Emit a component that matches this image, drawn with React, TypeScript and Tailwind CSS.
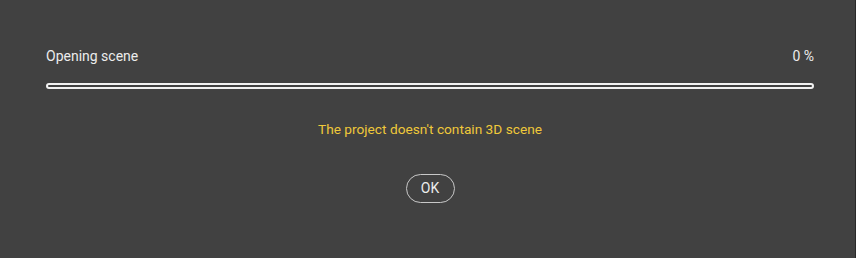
export default function App() {
  return (
    <div className="flex h-[258px] w-[856px] bg-[#414141] font-['Roboto',sans-serif]">
      <div className="flex flex-1 flex-col pl-[46px] pr-[41px] pt-[47px]">
        <div className="flex items-center justify-between text-[14px] leading-[18px] text-[#ececec]">
          <span>Opening scene</span>
          <span>0 %</span>
        </div>
        <div className="mt-[18px] h-[6px] rounded-full border-2 border-[#f2f2f2]" />
        <div className="mt-[31px] text-center text-[13.7px] leading-[18px] text-[#efc83a]">
          The project doesn't contain 3D scene
        </div>
        <div className="mt-[36px] flex justify-center">
          <button className="h-[29px] w-[49px] rounded-full border border-[#c8c8c8] text-[14px] text-[#ececec]">
            OK
          </button>
        </div>
      </div>
      <div className="w-px bg-[#2a2a2a]" />
    </div>
  );
}
